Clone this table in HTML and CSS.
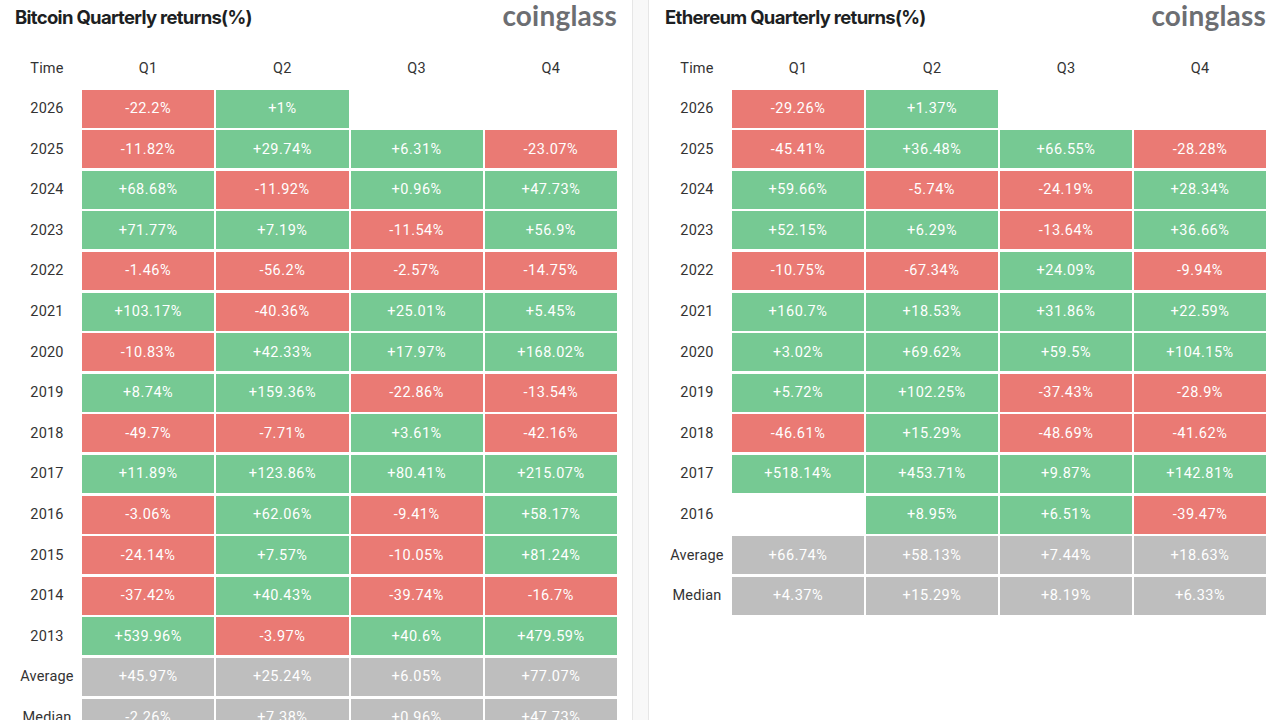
FILE: index.html
```html
<!DOCTYPE html>
<html>
<head>
<meta charset="utf-8">
<link rel="stylesheet" href="styles.css">
</head>
<body>
<div class="page">
  <section class="panel">
    <header class="head">
      <h1 class="title">Bitcoin Quarterly returns(%)</h1>
      <span class="logo">coinglass</span>
    </header>
    <div class="table">
      <div class="th">Time</div><div class="th">Q1</div><div class="th">Q2</div><div class="th">Q3</div><div class="th">Q4</div>
      <div class="lbl">2026</div><div class="c dn">-22.2%</div><div class="c up">+1%</div><div class="c"></div><div class="c"></div>
      <div class="lbl">2025</div><div class="c dn">-11.82%</div><div class="c up">+29.74%</div><div class="c up">+6.31%</div><div class="c dn">-23.07%</div>
      <div class="lbl">2024</div><div class="c up">+68.68%</div><div class="c dn">-11.92%</div><div class="c up">+0.96%</div><div class="c up">+47.73%</div>
      <div class="lbl">2023</div><div class="c up">+71.77%</div><div class="c up">+7.19%</div><div class="c dn">-11.54%</div><div class="c up">+56.9%</div>
      <div class="lbl">2022</div><div class="c dn">-1.46%</div><div class="c dn">-56.2%</div><div class="c dn">-2.57%</div><div class="c dn">-14.75%</div>
      <div class="lbl">2021</div><div class="c up">+103.17%</div><div class="c dn">-40.36%</div><div class="c up">+25.01%</div><div class="c up">+5.45%</div>
      <div class="lbl">2020</div><div class="c dn">-10.83%</div><div class="c up">+42.33%</div><div class="c up">+17.97%</div><div class="c up">+168.02%</div>
      <div class="lbl">2019</div><div class="c up">+8.74%</div><div class="c up">+159.36%</div><div class="c dn">-22.86%</div><div class="c dn">-13.54%</div>
      <div class="lbl">2018</div><div class="c dn">-49.7%</div><div class="c dn">-7.71%</div><div class="c up">+3.61%</div><div class="c dn">-42.16%</div>
      <div class="lbl">2017</div><div class="c up">+11.89%</div><div class="c up">+123.86%</div><div class="c up">+80.41%</div><div class="c up">+215.07%</div>
      <div class="lbl">2016</div><div class="c dn">-3.06%</div><div class="c up">+62.06%</div><div class="c dn">-9.41%</div><div class="c up">+58.17%</div>
      <div class="lbl">2015</div><div class="c dn">-24.14%</div><div class="c up">+7.57%</div><div class="c dn">-10.05%</div><div class="c up">+81.24%</div>
      <div class="lbl">2014</div><div class="c dn">-37.42%</div><div class="c up">+40.43%</div><div class="c dn">-39.74%</div><div class="c dn">-16.7%</div>
      <div class="lbl">2013</div><div class="c up">+539.96%</div><div class="c dn">-3.97%</div><div class="c up">+40.6%</div><div class="c up">+479.59%</div>
      <div class="lbl">Average</div><div class="c av">+45.97%</div><div class="c av">+25.24%</div><div class="c av">+6.05%</div><div class="c av">+77.07%</div>
      <div class="lbl">Median</div><div class="c av">-2.26%</div><div class="c av">+7.38%</div><div class="c av">+0.96%</div><div class="c av">+47.73%</div>
    </div>
  </section>
  <div class="divider"></div>
  <section class="panel right">
    <header class="head">
      <h1 class="title">Ethereum Quarterly returns(%)</h1>
      <span class="logo">coinglass</span>
    </header>
    <div class="table">
      <div class="th">Time</div><div class="th">Q1</div><div class="th">Q2</div><div class="th">Q3</div><div class="th">Q4</div>
      <div class="lbl">2026</div><div class="c dn">-29.26%</div><div class="c up">+1.37%</div><div class="c"></div><div class="c"></div>
      <div class="lbl">2025</div><div class="c dn">-45.41%</div><div class="c up">+36.48%</div><div class="c up">+66.55%</div><div class="c dn">-28.28%</div>
      <div class="lbl">2024</div><div class="c up">+59.66%</div><div class="c dn">-5.74%</div><div class="c dn">-24.19%</div><div class="c up">+28.34%</div>
      <div class="lbl">2023</div><div class="c up">+52.15%</div><div class="c up">+6.29%</div><div class="c dn">-13.64%</div><div class="c up">+36.66%</div>
      <div class="lbl">2022</div><div class="c dn">-10.75%</div><div class="c dn">-67.34%</div><div class="c up">+24.09%</div><div class="c dn">-9.94%</div>
      <div class="lbl">2021</div><div class="c up">+160.7%</div><div class="c up">+18.53%</div><div class="c up">+31.86%</div><div class="c up">+22.59%</div>
      <div class="lbl">2020</div><div class="c up">+3.02%</div><div class="c up">+69.62%</div><div class="c up">+59.5%</div><div class="c up">+104.15%</div>
      <div class="lbl">2019</div><div class="c up">+5.72%</div><div class="c up">+102.25%</div><div class="c dn">-37.43%</div><div class="c dn">-28.9%</div>
      <div class="lbl">2018</div><div class="c dn">-46.61%</div><div class="c up">+15.29%</div><div class="c dn">-48.69%</div><div class="c dn">-41.62%</div>
      <div class="lbl">2017</div><div class="c up">+518.14%</div><div class="c up">+453.71%</div><div class="c up">+9.87%</div><div class="c up">+142.81%</div>
      <div class="lbl">2016</div><div class="c"></div><div class="c up">+8.95%</div><div class="c up">+6.51%</div><div class="c dn">-39.47%</div>
      <div class="lbl">Average</div><div class="c av">+66.74%</div><div class="c av">+58.13%</div><div class="c av">+7.44%</div><div class="c av">+18.63%</div>
      <div class="lbl">Median</div><div class="c av">+4.37%</div><div class="c av">+15.29%</div><div class="c av">+8.19%</div><div class="c av">+6.33%</div>
    </div>
  </section>
</div>
</body>
</html>
```

FILE: styles.css
```css
* { box-sizing: border-box; }
html, body { margin: 0; padding: 0; background: #fff; }
body { width: 1280px; height: 720px; overflow: hidden; font-family: "Roboto", "Liberation Sans", sans-serif; }
.page { display: flex; height: 720px; }
.panel { width: 632px; flex: 0 0 632px; padding: 0 15px 0 14px; }
.panel.right { width: 631px; flex: 0 0 631px; padding: 0 14px 0 15px; }
.divider { flex: 0 0 17px; background: #f8f8f8; border-left: 1px solid #e6e6e6; border-right: 1px solid #e6e6e6; }
.head { height: 49px; display: flex; align-items: flex-start; justify-content: space-between; }
.title { margin: 4px 0 0 1px; font-family: "Inter", "Liberation Sans", sans-serif; font-weight: 700; font-size: 18.5px; letter-spacing: -0.7px; color: #1d1f23; line-height: 26px; }
.logo { margin-top: 0; font-family: "Lato", "Open Sans", sans-serif; font-weight: 700; font-size: 28px; color: #6c6e72; line-height: 30px; letter-spacing: 0.2px; }
.table { display: grid; grid-template-columns: 66px repeat(4, 1fr); grid-auto-rows: 38px; column-gap: 2px; row-gap: 2.6px; }
.th, .lbl { display: flex; align-items: center; justify-content: center; font-size: 14.5px; color: #333; letter-spacing: 0.2px; }
.c { display: flex; align-items: center; justify-content: center; font-size: 14.5px; color: #fff; letter-spacing: 0.5px; }
.up { background: #76c993; }
.dn { background: #ea7a74; }
.av { background: #bebebe; }
```
